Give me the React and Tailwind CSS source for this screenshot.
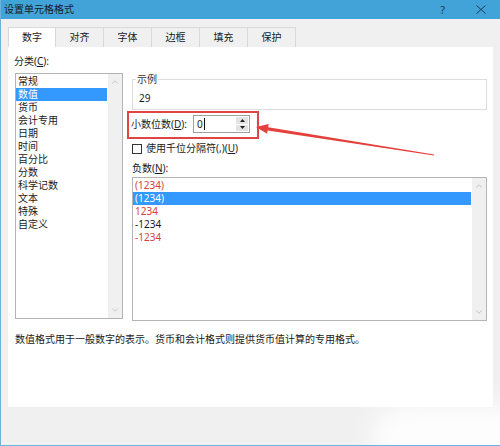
import { ChevronUp, ChevronDown } from "lucide-react";

const tabs = ["数字", "对齐", "字体", "边框", "填充", "保护"];

const categories = [
  "常规",
  "数值",
  "货币",
  "会计专用",
  "日期",
  "时间",
  "百分比",
  "分数",
  "科学记数",
  "文本",
  "特殊",
  "自定义",
];

const negatives = [
  { label: "(1234)", red: true },
  { label: "(1234)", selected: true },
  { label: "1234", red: true },
  { label: "-1234" },
  { label: "-1234", red: true },
];

function ScrollTrack() {
  return (
    <div className="w-[14px] shrink-0 bg-[#f0f0f0] flex flex-col justify-between items-center py-[3px] text-[#a8a8a8]">
      <ChevronUp size={10} strokeWidth={1.5} />
      <ChevronDown size={10} strokeWidth={1.5} />
    </div>
  );
}

function ListItem({ label, selected, red }) {
  const color = selected ? "bg-[#3399ff] text-white" : red ? "text-[#d9403f]" : "text-[#1a1a1a]";
  return <div className={`h-[13px] leading-[13px] pl-[2px] mr-px ${color}`}>{label}</div>;
}

export default function App() {
  return (
    <div className="relative w-[500px] h-[446px] overflow-hidden bg-[#f0f0f0] border-l border-b border-[#6fb3dc] font-['Noto_Sans','Noto_Sans_CJK_SC',sans-serif] text-[10px] text-[#1a1a1a]">
      <div className="h-[19px] bg-[#41a3d7] flex items-center justify-between pl-[3px]">
        <span className="text-[10px] leading-[13px] text-[#1b1b1b]">设置单元格格式</span>
        <div className="flex items-center mr-[14px] text-[#1d3d5c]">
          <span className="text-[11px] leading-[12px]">?</span>
          <svg width="10" height="9" viewBox="0 0 10 9" className="ml-[31px]">
            <path d="M0.5 0.5 L9.5 8.5 M9.5 0.5 L0.5 8.5" stroke="currentColor" strokeWidth="1" fill="none" />
          </svg>
        </div>
      </div>

      <div className="flex ml-[7px] mt-[8px] h-[20px]">
        {tabs.map((tab, i) => (
          <div
            key={tab}
            className={`w-[48px] flex items-center justify-center border-t border-r border-[#d9d9d9] ${
              i === 0 ? "bg-white border-l" : "bg-[#f0f0f0]"
            }`}
          >
            {tab}
          </div>
        ))}
      </div>

      <div className="relative ml-[7px] w-[485px] h-[360px] bg-white">
        <div className="flex">
          <div className="ml-[7px] w-[108px] shrink-0">
            <div className="-ml-px mt-[8px] h-[13px] leading-[13px]">
              分类(<span className="underline">C</span>):
            </div>
            <div className="mt-[5px] h-[246px] border border-[#b4b4b4] flex">
              <div className="flex-1 pt-px">
                {categories.map((c, i) => (
                  <ListItem key={c} label={c} selected={i === 1} />
                ))}
              </div>
              <ScrollTrack />
            </div>
          </div>

          <div className="ml-[9px] w-[355px] shrink-0">
            <div className="relative mt-[32px] h-[31px] border border-[#dcdcdc]">
              <span className="absolute -top-[7px] left-[3px] bg-white px-px leading-[13px] text-[#333]">示例</span>
              <div className="pt-[12px] pl-[6px] leading-[12px]">29</div>
            </div>

            <div className="mt-[5px] h-[18px] flex items-center">
              <span className="w-[62px] -ml-px leading-[13px]">
                小数位数(<span className="underline">D</span>):
              </span>
              <div className="w-[57px] h-[18px] border border-[#a0a0a0] flex items-center">
                <span className="pl-[3px] flex-1 flex items-center leading-[13px]">
                  0<span className="ml-px w-px h-[12px] bg-[#111]" />
                </span>
                <div className="w-[13px] h-full flex flex-col gap-px py-px pr-px">
                  <div className="flex-1 bg-[#e3e3e3] flex items-center justify-center">
                    <svg width="5" height="3" viewBox="0 0 5 3">
                      <path d="M0 3 L2.5 0 L5 3 Z" fill="#222" />
                    </svg>
                  </div>
                  <div className="flex-1 bg-[#e3e3e3] flex items-center justify-center">
                    <svg width="5" height="3" viewBox="0 0 5 3">
                      <path d="M0 0 L5 0 L2.5 3 Z" fill="#222" />
                    </svg>
                  </div>
                </div>
              </div>
            </div>

            <div className="mt-[10px] h-[11px] flex items-center">
              <div className="w-[10px] h-[10px] border border-[#333] bg-white" />
              <span className="ml-[4px] leading-[13px]">
                使用千位分隔符(,)(<span className="underline">U</span>)
              </span>
            </div>

            <div className="mt-[8px] h-[13px] leading-[13px]">
              负数(<span className="underline">N</span>):
            </div>
            <div className="mt-[2px] h-[144px] border border-[#b4b4b4] flex">
              <div className="flex-1 pt-px">
                {negatives.map((n, i) => (
                  <ListItem key={i} {...n} />
                ))}
              </div>
              <ScrollTrack />
            </div>
          </div>
        </div>

        <p className="ml-[7px] mt-[12px] leading-[13px]">
          数值格式用于一般数字的表示。货币和会计格式则提供货币值计算的专用格式。
        </p>

        <div className="absolute left-[119px] top-[64px] w-[132px] h-[28px] border-2 border-[#e04545]" />
      </div>

      <svg width="190" height="42" viewBox="0 0 190 42" className="absolute left-[250px] top-[118px] pointer-events-none">
        <polygon
          points="5,9 17.7,6 17.15,9.3 183.06,36.6 182.94,37.4 16.65,12.5 16.1,15.8"
          fill="#e5403b"
        />
      </svg>

      <div className="absolute left-[370px] top-[405px] w-[170px] h-[70px] rounded-full bg-white blur-md opacity-90" />
    </div>
  );
}
